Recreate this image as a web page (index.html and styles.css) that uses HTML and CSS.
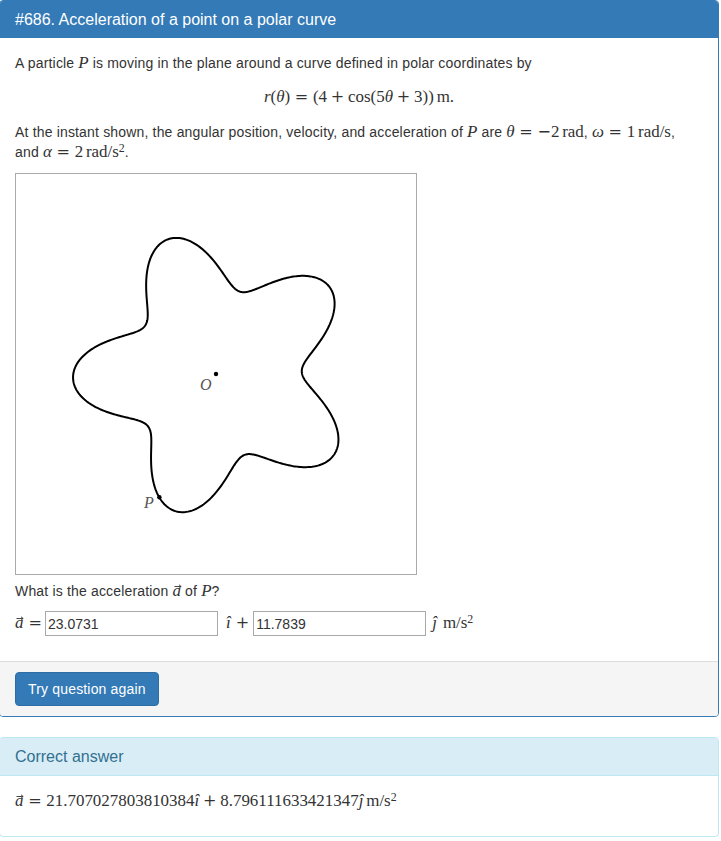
FILE: index.html
```html
<!DOCTYPE html>
<html lang="en">
<head>
<meta charset="utf-8">
<title>#686. Acceleration of a point on a polar curve</title>
<link rel="stylesheet" href="styles.css">
</head>
<body>
<div class="panel panel-primary">
  <div class="panel-heading"><h3 class="panel-title">#686. Acceleration of a point on a polar curve</h3></div>
  <div class="panel-body">
    <p>A particle <span class="m mi">P</span> is moving in the plane around a curve defined in polar coordinates by</p>
    <div class="display"><span class="m"><span class="mi">r</span>(<span class="mi">θ</span>)<span class="rel">=</span>(4<span class="bin">+</span>cos(5<span class="mi">θ</span><span class="bin">+</span>3))<span class="thin">m.</span></span></div>
    <p class="p2">At the instant shown, the angular position, velocity, and acceleration of <span class="m mi">P</span> are <span class="m nw"><span class="mi">θ</span><span class="rel">=</span><span class="op">−</span>2<span class="thin">rad</span></span>, <span class="m nw"><span class="mi">ω</span><span class="rel">=</span>1<span class="thin">rad/s</span></span>,<br>and <span class="m nw"><span class="mi">α</span><span class="rel">=</span>2<span class="thin">rad/s<sup>2</sup></span></span>.</p>
    <div class="figure">
      <svg width="400" height="400" viewBox="0 0 400 400">
        <path id="curve" d="" fill="none" stroke="#000" stroke-width="2"></path>
        <circle cx="200" cy="200" r="2.2" fill="#000"></circle>
        <circle cx="143.4" cy="323.2" r="2.2" fill="#000"></circle>
        <text x="184" y="216" class="lbl">O</text>
        <text x="128" y="334" class="lbl">P</text>
      </svg>
    </div>
    <p>What is the acceleration <span class="m mi vec">a<svg class="arrow" width="8" height="5" viewBox="0 0 8 5"><path d="M0.5 2.5H7M5 0.8L7.2 2.5L5 4.2" fill="none" stroke="#333" stroke-width="0.9"/></svg></span> of <span class="m mi">P</span>?</p>
    <div class="answer-row">
      <span class="m mi vec">a<svg class="arrow" width="8" height="5" viewBox="0 0 8 5"><path d="M0.5 2.5H7M5 0.8L7.2 2.5L5 4.2" fill="none" stroke="#333" stroke-width="0.9"/></svg></span>
      <span class="m"><span class="op eq">=</span></span>
      <input class="field" type="text" value="23.0731">
      <span class="m mi hat">î</span>
      <span class="m"><span class="op plus">+</span></span>
      <input class="field" type="text" value="11.7839">
      <span class="m mi hat2">ĵ</span>
      <span class="m unit">m/s<sup>2</sup></span>
    </div>
  </div>
  <div class="panel-footer"><button class="btn" type="button">Try question again</button></div>
</div>
<div class="panel panel-info">
  <div class="panel-heading"><h3 class="panel-title">Correct answer</h3></div>
  <div class="panel-body">
    <p><span class="m"><span class="mi vec">a<svg class="arrow" width="8" height="5" viewBox="0 0 8 5"><path d="M0.5 2.5H7M5 0.8L7.2 2.5L5 4.2" fill="none" stroke="#333" stroke-width="0.9"/></svg></span><span class="rel">=</span>21.707027803810384<span class="mi">î</span><span class="bin">+</span>8.796111633421347<span class="mi">ĵ</span><span class="thin">m/s<sup>2</sup></span></span></p>
  </div>
</div>
<script src="script.js"></script>
</body>
</html>
```
FILE: styles.css
```css
body {
  margin: 0;
  font-family: "Liberation Sans", Arial, sans-serif;
  font-size: 14px;
  line-height: 20px;
  letter-spacing: 0.17px;
  color: #333;
  background: #fff;
}
p { margin: 0 0 10px; }

.panel {
  width: 720px;
  margin-left: -1px;
  box-sizing: border-box;
  border: 1px solid #ddd;
  border-radius: 4px;
  margin-bottom: 20px;
  background: #fff;
}
.panel-heading {
  padding: 10px 15px;
  border-radius: 3px 3px 0 0;
}
.panel-title {
  margin: 0;
  font-size: 16px;
  line-height: 17px;
  font-weight: normal;
  letter-spacing: 0;
}
.panel-body { padding: 15px; }
.panel-primary { border-color: #337ab7; }
.panel-primary .panel-heading { background: #337ab7; color: #fff; }
.panel-info { border-color: #bce8f1; }
.panel-info .panel-heading {
  background: #d9edf7;
  color: #31708f;
  border-bottom: 1px solid #bce8f1;
}

.panel-footer {
  padding: 10px 15px;
  background: #f5f5f5;
  border-top: 1px solid #ddd;
  border-radius: 0 0 3px 3px;
}
.btn {
  font-family: "Liberation Sans", Arial, sans-serif;
  font-size: 14px;
  line-height: 20px;
  letter-spacing: 0.17px;
  padding: 6px 12px;
  color: #fff;
  background: #337ab7;
  border: 1px solid #2e6da4;
  border-radius: 4px;
  cursor: pointer;
}

.m {
  font-family: "Liberation Serif", "DejaVu Serif", serif;
  font-size: 1.21em;
  line-height: 1;
  letter-spacing: 0;
}
.m .m { font-size: 1em; }
.mi { font-style: italic; }
.nw { white-space: nowrap; }
.rel, .bin, .op {
  font-family: "DejaVu Serif", "Liberation Serif", serif;
  font-size: 0.95em;
  font-style: normal;
}
.rel { margin: 0 0.29em; }
.bin { margin: 0 0.234em; }
.thin { margin-left: 0.167em; }
.m sup {
  font-size: 0.7em;
  line-height: 0;
  vertical-align: 0.45em;
  font-style: normal;
}
.display {
  text-align: center;
  margin: 14px 0;
  height: 21px;
  line-height: 21px;
}
.p2 { margin-bottom: 11px; }
.vec {
  position: relative;
  display: inline-block;
}
.vec .arrow {
  position: absolute;
  left: 1px;
  top: 1px;
}

.figure {
  width: 402px;
  height: 402px;
  box-sizing: border-box;
  border: 1px solid #aaa;
  margin-bottom: 6px;
}
.figure svg { display: block; }
.lbl {
  font-family: "Liberation Serif", "DejaVu Serif", serif;
  font-style: italic;
  font-size: 16px;
  fill: #555;
}

.answer-row {
  display: flex;
  align-items: center;
  height: 25px;
  margin-bottom: 10px;
}
.eq { display: inline-block; margin: 0 3px 0 5px; }
.field {
  width: 173px;
  height: 25px;
  box-sizing: border-box;
  border: 1px solid #a9a9a9;
  padding: 1px 2px;
  font-family: "Liberation Sans", Arial, sans-serif;
  font-size: 14px;
  letter-spacing: 0;
  color: #333;
  margin: 0;
}
.hat { margin-left: 8px; }
.plus { display: inline-block; margin: 0 4px 0 5px; }
.hat2 { margin-left: 6px; }
.unit { margin-left: 6px; }
```
FILE: script.js
```js
(function () {
  var path = document.getElementById('curve');
  var s = 28.6, cx = 200, cy = 200, n = 720, d = '';
  for (var i = 0; i <= n; i++) {
    var t = i / n * 2 * Math.PI;
    var r = 4 + Math.cos(5 * t + 3);
    var x = cx + s * r * Math.cos(t);
    var y = cy - s * r * Math.sin(t);
    d += (i ? 'L' : 'M') + x.toFixed(2) + ' ' + y.toFixed(2);
  }
  path.setAttribute('d', d + 'Z');
})();
```
